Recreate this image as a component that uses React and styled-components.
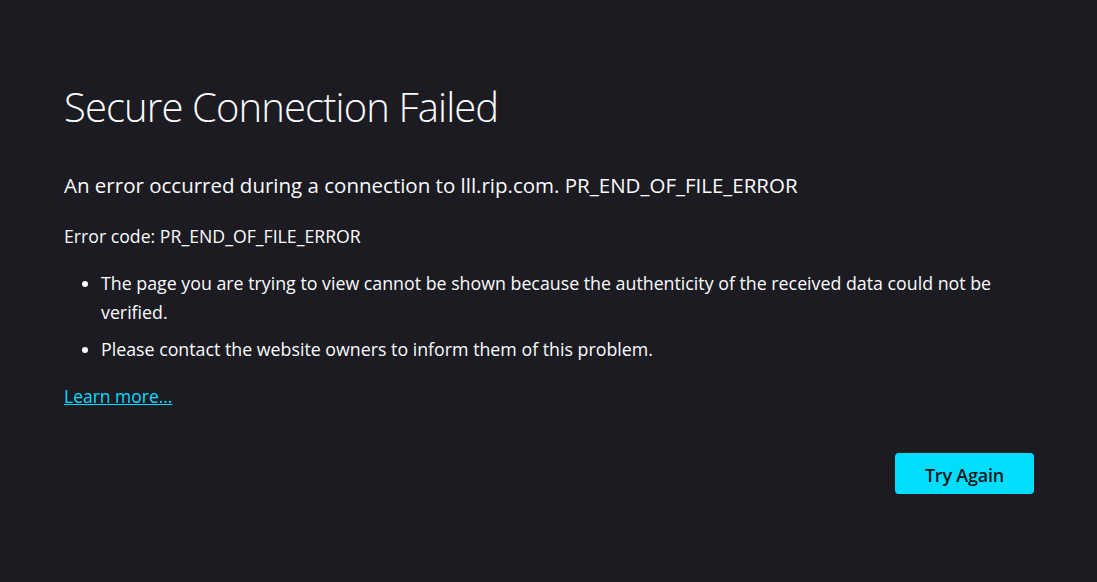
import React from 'react';
import styled, { createGlobalStyle } from 'styled-components';

const GlobalStyle = createGlobalStyle`
  html, body {
    margin: 0;
    padding: 0;
    background-color: #1c1b22;
  }
  body {
    font-family: "Open Sans", "Noto Sans", sans-serif;
    color: #fbfbfe;
  }
`;

const Page = styled.div`
  min-height: 582px;
  box-sizing: border-box;
  padding: 82px 63px 0 64px;
`;

const Container = styled.main`
  max-width: 970px;
`;

const Title = styled.h1`
  margin: 0;
  font-size: 40px;
  font-weight: 300;
  line-height: 50px;
  letter-spacing: -0.9px;
`;

const ShortDesc = styled.p`
  margin: 39px 0 0;
  font-size: 20.5px;
  line-height: 28px;
`;

const ErrorCode = styled.p`
  margin: 24px 0 0;
  font-size: 17.7px;
  line-height: 26px;
`;

const List = styled.ul`
  margin: 20px 0 0;
  padding-left: 37px;
  font-size: 17.8px;
  line-height: 29px;
`;

const Item = styled.li`
  margin-bottom: 8px;
`;

const LearnMore = styled.a`
  display: inline-block;
  margin-top: 11px;
  font-size: 17.5px;
  line-height: 26px;
  color: #00ddff;
  text-decoration: underline;
`;

const Actions = styled.div`
  display: flex;
  justify-content: flex-end;
  margin-top: 44px;
`;

const Button = styled.button`
  width: 139px;
  height: 41px;
  padding: 2px 0 0;
  border: none;
  border-radius: 4px;
  background-color: #00ddff;
  color: #15141a;
  font-family: "Open Sans", "Noto Sans", sans-serif;
  font-size: 18px;
  font-weight: 600;
  letter-spacing: -0.2px;
  cursor: pointer;
`;

export default function App() {
  return (
    <>
      <GlobalStyle />
      <Page>
        <Container>
          <Title>Secure Connection Failed</Title>
          <ShortDesc>
            An error occurred during a connection to lll.rip.com. PR_END_OF_FILE_ERROR
          </ShortDesc>
          <ErrorCode>Error code: PR_END_OF_FILE_ERROR</ErrorCode>
          <List>
            <Item>
              The page you are trying to view cannot be shown because the authenticity of the
              received data could not be verified.
            </Item>
            <Item>Please contact the website owners to inform them of this problem.</Item>
          </List>
          <LearnMore href="#">Learn more…</LearnMore>
          <Actions>
            <Button>Try Again</Button>
          </Actions>
        </Container>
      </Page>
    </>
  );
}
